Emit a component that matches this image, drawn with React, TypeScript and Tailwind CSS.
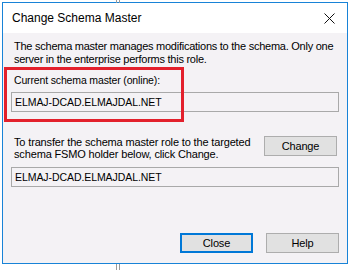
import React from "react";

const font = { fontFamily: '"Liberation Sans", Arial, sans-serif' };

function ReadOnlyBox({ value }: { value: string }) {
  return (
    <div className="h-[20px] w-[328px] border border-[#a9a9a9] bg-[#f4f2f5] pl-[3px] text-[10.5px] leading-[18px] tracking-[-0.07px] text-black">
      {value}
    </div>
  );
}

function DlgButton({ label, focused }: { label: string; focused?: boolean }) {
  return (
    <button
      className={`h-[20px] w-[73px] bg-[#e1e1e1] text-[11px] leading-none tracking-[-0.15px] text-black ${
        focused ? "border-2 border-[#0078d7]" : "border border-[#adadad]"
      }`}
    >
      {label}
    </button>
  );
}

export default function App() {
  return (
    <div className="relative h-[270px] w-[353px] overflow-hidden bg-white" style={font}>
      {/* bits of the window behind */}
      <div className="absolute left-[116px] top-0 h-[3px] w-[4px] border-x border-[#9a9a9a]" />
      <div className="absolute left-[116px] top-[264px] h-[6px] w-[4px] border-x border-[#9a9a9a]" />

      <div className="ml-[2px] mt-[2px] flex h-[262px] w-[346px] flex-col border border-[#1883d7]">
        {/* title bar */}
        <div className="flex h-[30px] items-center justify-between bg-white pl-[9px] pr-[12px]">
          <span className="text-[12px] text-black">Change Schema Master</span>
          <svg width="11" height="11" viewBox="0 0 11 11">
            <path d="M0.5 0.5 L10.5 10.5 M10.5 0.5 L0.5 10.5" stroke="#111" strokeWidth="1" />
          </svg>
        </div>

        {/* body */}
        <div className="relative flex flex-1 flex-col whitespace-nowrap bg-[#f4f2f5] pl-[8px] pt-[7px] text-[11px] text-black">
          <p className="pl-[3px] leading-[13px] tracking-[-0.25px]">
            The schema master manages modifications to the schema. Only one
            <br />
            server in the enterprise performs this role.
          </p>

          <p className="mt-[8px] pl-[3px] text-[10.5px] leading-[13px] tracking-[-0.15px]">
            Current schema master (online):
          </p>
          <div className="mt-[5px]">
            <ReadOnlyBox value="ELMAJ-DCAD.ELMAJDAL.NET" />
          </div>

          <div className="mt-[24px] flex w-[326px] items-start justify-between">
            <p className="pl-[3px] leading-[12px] tracking-[-0.15px]">
              To transfer the schema master role to the targeted
              <br />
              schema FSMO holder below, click Change.
            </p>
            <DlgButton label="Change" />
          </div>

          <div className="mt-[7px]">
            <ReadOnlyBox value="ELMAJ-DCAD.ELMAJDAL.NET" />
          </div>

          <div className="mt-[46px] flex justify-end gap-[13px] pr-[8px]">
            <DlgButton label="Close" focused />
            <DlgButton label="Help" />
          </div>

          {/* red highlight annotation */}
          <div className="absolute left-[1px] top-[34px] h-[55px] w-[180px] border-[3px] border-[#e3202c]" />
        </div>
      </div>
    </div>
  );
}
